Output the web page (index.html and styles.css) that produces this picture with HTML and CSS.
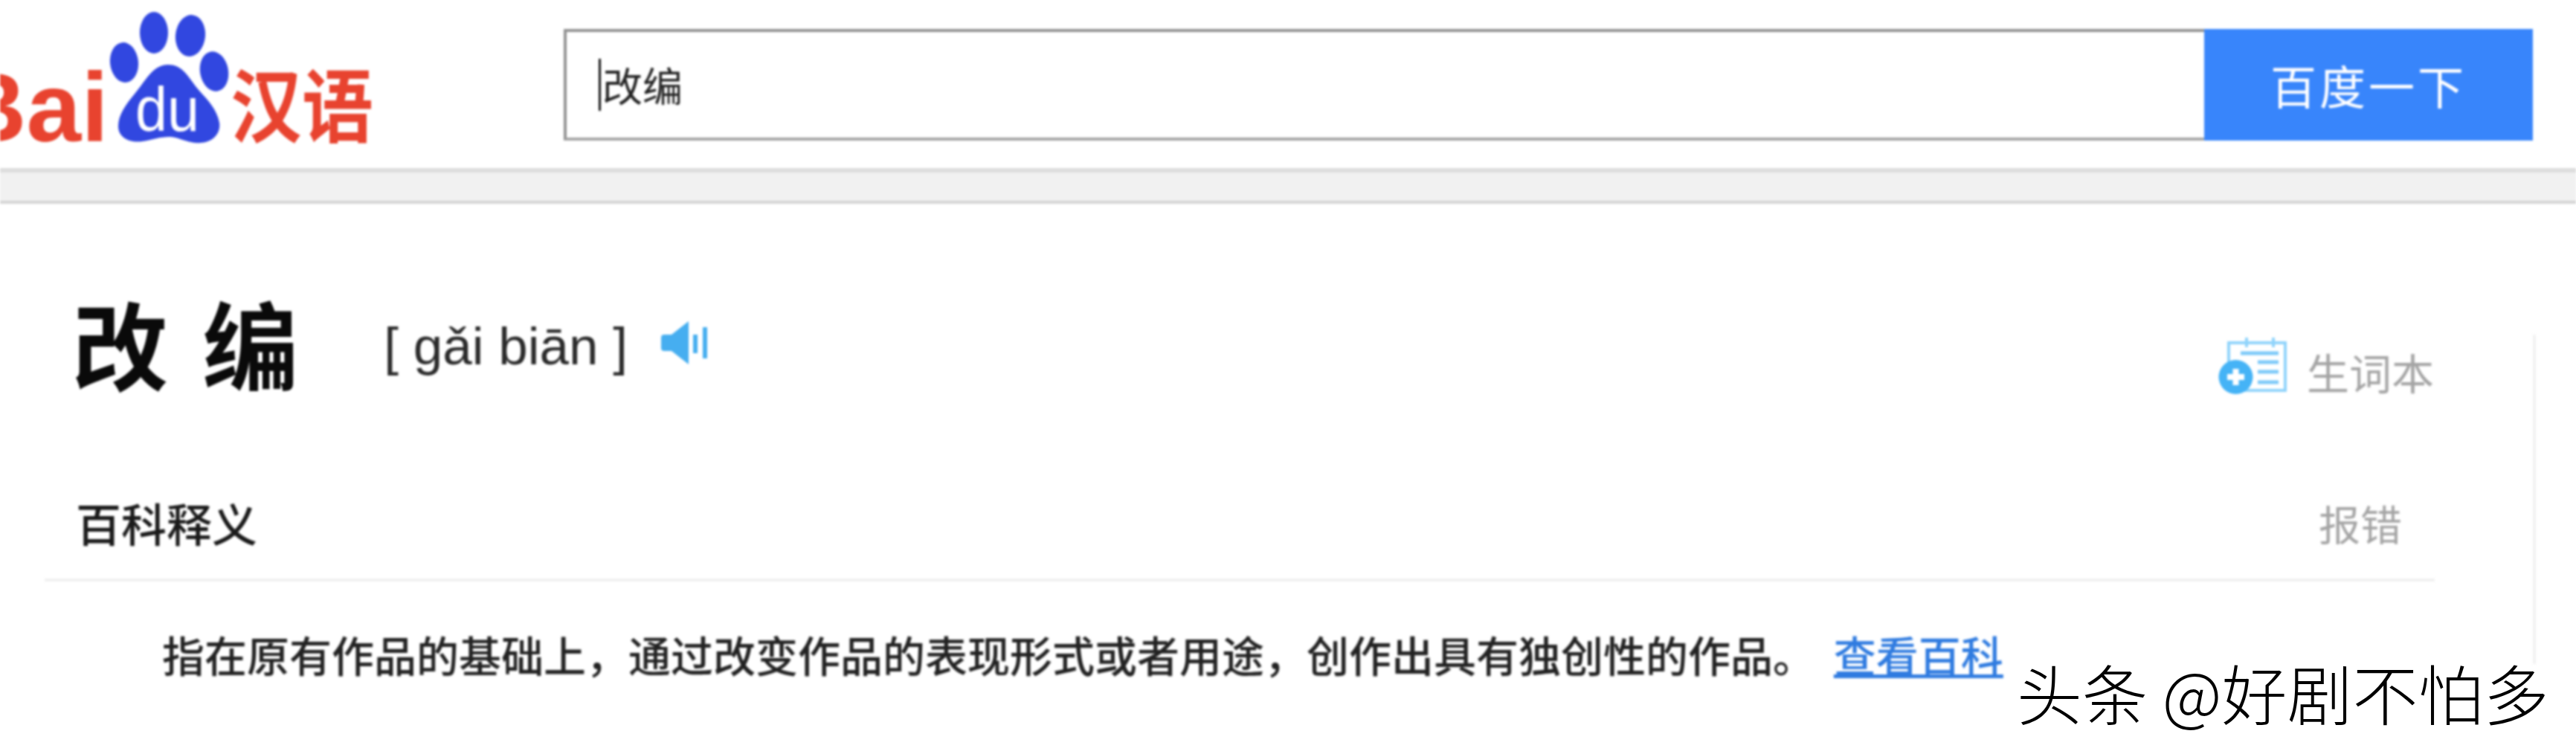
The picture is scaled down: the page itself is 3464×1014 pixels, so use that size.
FILE: index.html
```html
<!DOCTYPE html>
<html lang="zh-CN">
<head>
<meta charset="utf-8">
<title>改编 - 百度汉语</title>
<link rel="stylesheet" href="styles.css">
</head>
<body>
<div class="page">
  <div class="soft">
    <header class="topbar">
      <svg class="logo" viewBox="0 0 510 226" width="510" height="226" aria-label="Baidu 汉语">
        <text class="logo-bai" x="-60" y="190" textLength="206" lengthAdjust="spacingAndGlyphs">Bai</text>
        <ellipse class="paw" cx="207" cy="44" rx="19" ry="28"/>
        <ellipse class="paw" cx="256" cy="48" rx="20" ry="28" transform="rotate(6 256 48)"/>
        <ellipse class="paw" cx="167" cy="84" rx="19" ry="27" transform="rotate(-6 167 84)"/>
        <ellipse class="paw" cx="288" cy="96" rx="19" ry="27" transform="rotate(-10 288 96)"/>
        <path class="paw" d="M226 87C205 87 195 110 182 125C168 142 159 155 159 170C159 185 175 193 192 190C205 188 215 184 228 184C240 184 255 194 270 192C288 191 297 178 295 165C292 148 280 135 268 122C255 108 248 87 226 87Z"/>
        <text class="logo-du" x="182" y="176" textLength="86" lengthAdjust="spacingAndGlyphs">du</text>
        <text class="logo-cn" x="310" y="183" textLength="192" lengthAdjust="spacingAndGlyphs">汉语</text>
      </svg>
      <form class="search">
        <div class="search-box"><span class="caret"></span><span class="search-text">改编</span></div>
        <div class="search-btn">百度一下</div>
      </form>
    </header>
    <div class="band"></div>
    <main class="main">
      <section class="entry">
        <div class="head">
          <h1 class="word">改 编</h1>
          <span class="pinyin">[ gǎi biān ]</span>
          <svg class="speaker" viewBox="0 0 62 58" width="62" height="58" aria-hidden="true">
            <path d="M0 22Q0 18 4 18L14 18L37 0L37 58L14 40L4 40Q0 40 0 36Z"/>
            <rect x="43" y="18" width="6" height="25"/>
            <rect x="56" y="8" width="6" height="42"/>
          </svg>
          <div class="vocab">
            <svg class="vocab-icon" viewBox="0 0 96 78" width="96" height="78" aria-hidden="true">
              <rect class="nb" x="16" y="8" width="76" height="64"/>
              <path class="nb" d="M40 1V14M76 1V14"/>
              <path class="nb-line" d="M32 22H83M55 34H83M55 47H83M55 61H83"/>
              <circle class="nb-dot" cx="25.500" cy="54" r="23"/>
              <path class="nb-plus" d="M14 54H37M25.500 43V65"/>
            </svg>
            <span class="vocab-text">生词本</span>
          </div>
        </div>
        <div class="section-head">
          <h2 class="section-title">百科释义</h2>
          <span class="report">报错</span>
        </div>
        <p class="definition">指在原有作品的基础上，通过改变作品的表现形式或者用途，创作出具有独创性的作品。 <a class="more" href="#">查看百科</a></p>
      </section>
    </main>
  </div>
  <div class="watermark">头条 @好剧不怕多</div>
</div>
</body>
</html>
```

FILE: styles.css
```css
html, body {
  margin: 0;
  padding: 0;
  background: #fff;
}

.page {
  position: relative;
  width: 3464px;
  height: 1014px;
  overflow: hidden;
  background: #fff;
  font-family: "Noto Sans CJK SC", "Liberation Sans", sans-serif;
}

.soft {
  filter: blur(1.4px);
}

.topbar {
  display: flex;
  height: 226px;
  gap: 248px;
}

.logo {
  display: block;
  flex: none;
}

.logo-bai {
  font: 700 132px "Liberation Sans", sans-serif;
  fill: #e8432f;
}

.logo-du {
  font: 400 84px "Liberation Sans", sans-serif;
  fill: #fff;
}

.logo-cn {
  font: 700 108px "Noto Sans CJK SC", sans-serif;
  fill: #e8432f;
}

.paw {
  fill: #3147e0;
}

.search {
  display: flex;
  margin-top: 39px;
  height: 150px;
}

.search-box {
  box-sizing: border-box;
  display: flex;
  align-items: center;
  width: 2206px;
  height: 150px;
  padding-left: 43px;
  border: 4px solid #929292;
  border-right: 0;
  border-bottom-color: #a4a4a4;
}

.caret {
  width: 3px;
  height: 70px;
  background: #111;
}

.search-text {
  margin-left: 2px;
  font-size: 54px;
  line-height: 60px;
  color: #222;
}

.search-btn {
  display: flex;
  align-items: center;
  justify-content: center;
  width: 442px;
  height: 150px;
  background: #3885fb;
  color: #fff;
  font-size: 62px;
  letter-spacing: 4px;
}

.band {
  box-sizing: border-box;
  height: 48px;
  background: #f1f1f1;
  border-top: 6px solid #ddd;
  border-bottom: 4px solid #d4d4d4;
}

.main {
  padding: 176px 0 0 60px;
}

.entry {
  box-sizing: border-box;
  display: flow-root;
  width: 3350px;
  height: 443px;
  padding-right: 132px;
  border-right: 4px solid #f2f2f2;
}

.head {
  display: flex;
  align-items: flex-start;
  height: 222px;
  margin-top: -60px;
  padding-left: 37px;
}

.word {
  margin: 0;
  font-size: 129px;
  line-height: 140px;
  font-weight: 700;
  color: #0a0a0a;
  word-spacing: 17px;
  white-space: nowrap;
}

.pinyin {
  margin: 36px 0 0 115px;
  font: 400 71px/80px "Liberation Sans", sans-serif;
  color: #2a2a2a;
  white-space: nowrap;
}

.speaker {
  flex: none;
  margin: 42px 0 0 45px;
  fill: #46aef0;
}

.vocab {
  display: flex;
  align-items: flex-start;
  margin-left: auto;
  margin-top: 63px;
}

.vocab-icon {
  display: block;
  flex: none;
}

.nb {
  fill: none;
  stroke: #8ed3fb;
  stroke-width: 4;
}

.nb-line {
  fill: none;
  stroke: #7cc9f9;
  stroke-width: 5;
}

.nb-dot {
  fill: #45b3f6;
}

.nb-plus {
  fill: none;
  stroke: #fff;
  stroke-width: 8;
}

.vocab-text {
  margin: 16px 1px 0 25px;
  font-size: 57px;
  line-height: 60px;
  color: #a4a4a4;
}

.section-head {
  box-sizing: border-box;
  display: flex;
  align-items: center;
  justify-content: space-between;
  height: 170px;
  padding: 16px 44px 0 42px;
  border-bottom: 4px solid #f1f1f1;
}

.section-title {
  margin: 0;
  font-size: 61px;
  line-height: 70px;
  font-weight: 500;
  color: #1a1a1a;
}

.report {
  font-size: 56px;
  line-height: 70px;
  color: #a4a4a4;
}

.definition {
  margin: 66px 0 0;
  padding-left: 158px;
  font-size: 57px;
  line-height: 62px;
  font-weight: 500;
  color: #222;
  white-space: nowrap;
}

.more {
  margin-left: 12px;
  font-size: 57px;
  color: #2f7be0;
  text-decoration: underline;
}

.watermark {
  position: absolute;
  left: 2712px;
  top: 872px;
  font-size: 88px;
  line-height: 116px;
  font-weight: 300;
  color: #000;
  white-space: nowrap;
  text-shadow: 0 3px 0 #fff;
}
```
